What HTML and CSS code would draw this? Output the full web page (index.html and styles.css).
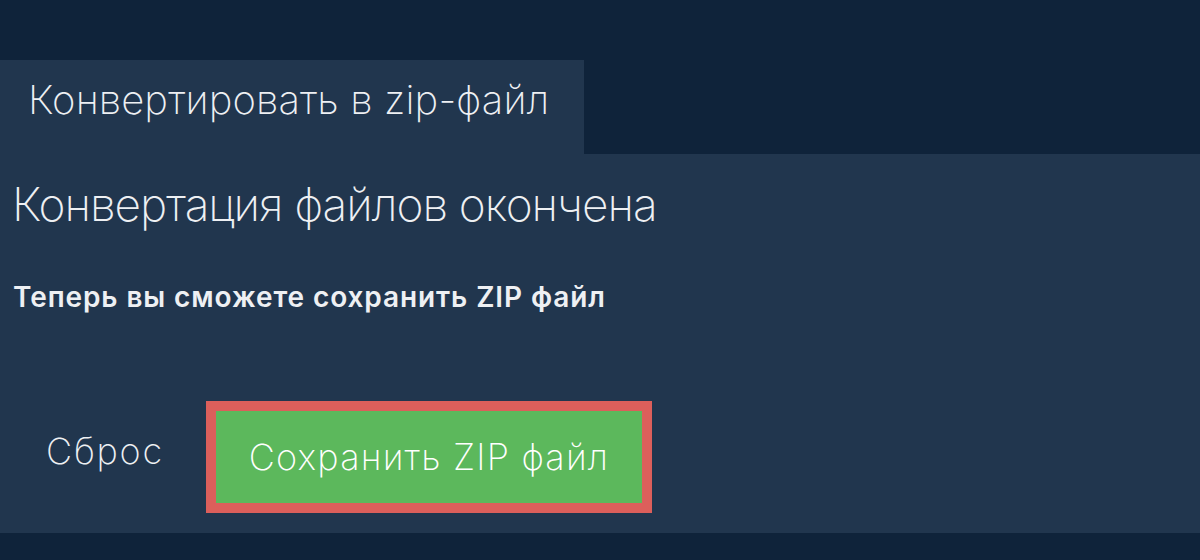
FILE: index.html
```html
<!DOCTYPE html>
<html lang="ru">
<head>
<meta charset="utf-8">
<title>Конвертировать в zip-файл</title>
<link rel="stylesheet" href="styles.css">
</head>
<body>
<div class="page">
  <div class="tabs">
    <div class="tab">Конвертировать в zip-файл</div>
  </div>
  <div class="panel">
    <h1 class="title">Конвертация файлов окончена</h1>
    <p class="note">Теперь вы сможете сохранить ZIP файл</p>
    <div class="actions">
      <button class="btn-reset">Сброс</button>
      <button class="btn-save">Сохранить ZIP файл</button>
    </div>
  </div>
</div>
</body>
</html>
```
FILE: styles.css
```css
html, body {
  margin: 0;
  padding: 0;
  background: #0f233a;
  height: 100%;
}
body {
  font-family: "Inter", "Noto Sans", sans-serif;
  color: #eef0f3;
}
.page {
  padding-top: 60px;
}
.tabs {
  display: flex;
}
.tab {
  width: 584px;
  height: 94px;
  box-sizing: border-box;
  background: #21364e;
  padding: 16px 0 0 28px;
  font-size: 40px;
  font-weight: 250;
  line-height: 48px;
  letter-spacing: 0.15px;
}
.panel {
  background: #21364e;
  height: 379px;
  box-sizing: border-box;
  padding: 22px 0 20px 12px;
  display: flex;
  flex-direction: column;
}
.title {
  margin: 0;
  font-size: 46px;
  font-weight: 250;
  line-height: 56px;
  letter-spacing: -1px;
}
.note {
  margin: 49px 0 0 1px;
  font-size: 28px;
  font-weight: 600;
  line-height: 32px;
  letter-spacing: 0.9px;
}
.actions {
  margin-top: auto;
  display: flex;
  align-items: center;
  gap: 42px;
}
.btn-reset {
  background: none;
  border: 0;
  padding: 0 0 12px 34px;
  font-family: inherit;
  font-size: 36px;
  font-weight: 250;
  color: #eef0f3;
  line-height: 44px;
  letter-spacing: 1.8px;
}
.btn-save {
  width: 446px;
  height: 112px;
  box-sizing: border-box;
  background: #5cb85c;
  border: 10px solid #dc5f5b;
  font-family: inherit;
  font-size: 36px;
  font-weight: 250;
  color: #ffffff;
  line-height: 44px;
  letter-spacing: 1.2px;
  padding: 0;
}
```
